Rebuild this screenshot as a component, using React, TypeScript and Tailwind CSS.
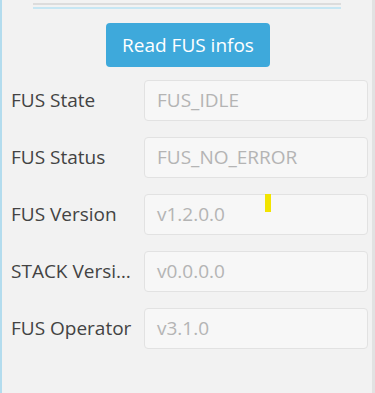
import React from 'react';

const rows = [
  { label: 'FUS State', value: 'FUS_IDLE' },
  { label: 'FUS Status', value: 'FUS_NO_ERROR' },
  { label: 'FUS Version', value: 'v1.2.0.0' },
  { label: 'STACK Version', value: 'v0.0.0.0' },
  { label: 'FUS Operator', value: 'v3.1.0' },
];

export default function App() {
  return (
    <div className="w-[375px] h-[393px] bg-[#f2f2f2] flex font-['Open_Sans',sans-serif] overflow-hidden">
      {/* left accent */}
      <div className="w-[2px] h-full bg-[#b3dcee]" />

      <div className="relative flex-1 flex flex-col">
        {/* top divider */}
        <div className="mx-[31px] mt-[3px] flex flex-col gap-[2px]">
          <div className="h-[2px] bg-[#dcdcdc]" />
          <div className="h-[2px] bg-[#c6e6f3]" />
        </div>

        <div className="flex justify-center mt-[14px] pl-[2px]">
          <button className="w-[164px] h-[44px] rounded-[4px] bg-[#3ea9db] text-white text-[19px]">
            Read FUS infos
          </button>
        </div>

        <div className="flex flex-col gap-[16px] mt-[13px] pl-[9px] pr-[4px]">
          {rows.map((r) => (
            <div key={r.label} className="flex items-center">
              <span className="w-[122px] mr-[11px] truncate text-[19px] text-[#434343]">{r.label}</span>
              <div className="flex-1 h-[41px] rounded-[4px] border border-[#e2e2e2] bg-[#f7f7f7] flex items-center pl-[12px] text-[19px] text-[#b4b4b4]">
                {r.value}
              </div>
            </div>
          ))}
        </div>

        {/* yellow marker */}
        <div className="absolute left-[263px] top-[194px] w-[6px] h-[18px] bg-[#f2e400]" />
      </div>

      {/* right edge */}
      <div className="w-[3px] h-full bg-[#e2e2e2]" />
    </div>
  );
}
